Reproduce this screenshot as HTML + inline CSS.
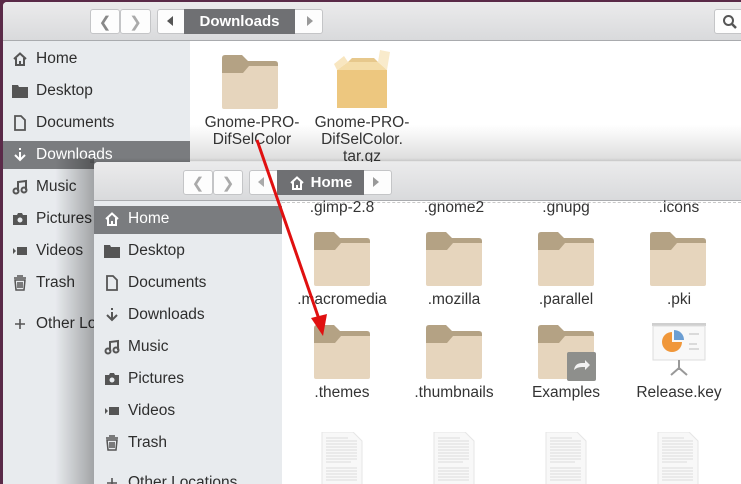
<!DOCTYPE html>
<html><head><meta charset="utf-8"><style>
*{margin:0;padding:0;box-sizing:border-box}
html{width:741px;height:484px;overflow:hidden}
body{width:741px;height:484px;overflow:hidden;position:relative;background:#5a2a48;font-family:"Liberation Sans",sans-serif;font-size:15.5px;color:#3c3c3c}
.a{position:absolute}
.hdr{background:linear-gradient(#ebebec,#d9dadc);border-bottom:1px solid #a9abae}
.btn{position:absolute;height:25px;background:#fdfdfd;border:1px solid #c4c5c7;border-radius:3px;display:flex;align-items:center;justify-content:center;color:#888;font-size:15px}
.sel{position:absolute;height:25px;background:#6f7073;color:#fff;font-weight:bold;display:flex;align-items:center;justify-content:center;font-size:15px}
.side{background:#e8ebee}
.it{position:absolute;left:0;height:20px;display:flex;align-items:center;white-space:nowrap;color:#2e2e2e}
.it svg{position:absolute}
.lbl{position:absolute;text-align:center;width:110px;line-height:17px;color:#333;white-space:nowrap}
#clip{position:absolute;left:0;top:0;width:741px;height:484px;overflow:hidden}
</style></head><body><div id="clip">
<svg width="0" height="0" style="position:absolute"><defs>
<symbol id="fold" viewBox="0 0 56 54"><path d="M0 3Q0 0 3 0H20L26 6H53Q56 6 56 9V24H0Z" fill="#b4a284"/><path d="M0 18H21L27 11H56V52Q56 54 54 54H2Q0 54 0 52Z" fill="#e6d5bd"/></symbol>
<symbol id="doc" viewBox="0 0 42 54"><path d="M1 0H32L41 9V54H1Z" fill="#f8f8f8" stroke="#e6e6e6"/><g stroke="#dcdcdc" stroke-width="1"><path d="M5 6H27M5 9H36M5 12H36M5 15H36M5 18H36M5 21H36M5 24H36M5 27H36M5 30H30M5 36H36M5 39H36M5 42H36M5 45H36M5 48H36"/></g></symbol>
</defs></svg>

<div class="a" style="left:3px;top:2px;width:738px;height:482px;background:#fff;border-radius:4px 0 0 0;overflow:hidden">
 <div class="a hdr" style="left:0;top:0;width:738px;height:39px"></div>
 <div class="btn" style="left:87px;top:7px;width:30px">&#10094;</div>
 <div class="btn" style="left:117px;top:7px;width:31px;color:#aaa">&#10095;</div>
 <div class="btn" style="left:154px;top:7px;width:166px"></div>
 <div class="a" style="left:164px;top:14px;width:0;height:0;border:5px solid transparent;border-right:6px solid #555;border-left:0"></div>
 <div class="sel" style="left:181px;top:7px;width:111px">Downloads</div>
 <div class="a" style="left:304px;top:14px;width:0;height:0;border:5px solid transparent;border-left:6px solid #999;border-right:0"></div>
 <div class="btn" style="left:711px;top:7px;width:40px;justify-content:flex-start;padding-left:7px"><svg width="16" height="16" viewBox="0 0 16 16"><circle cx="6.5" cy="6.5" r="4.5" fill="none" stroke="#555" stroke-width="2"/><path d="M10 10L14 14" stroke="#555" stroke-width="2.5"/></svg></div>
 <div class="a side" style="left:0;top:39px;width:187px;height:443px"></div>
 <div class="a" style="left:0;top:139px;width:187px;height:28px;background:#7a7c7f"></div>
 <div class="a" style="left:187px;top:39px;width:551px;height:120px;background:linear-gradient(#fff 70%,#dcdcdc)"></div>
</div>
<div class="it" style="left:12px;top:49px"><svg width="16" height="16" style="left:0" viewBox="0 0 16 16"><path d="M2 8L8 2.5L14 8M4 7V14H12V7" fill="none" stroke="#555" stroke-width="2"/><rect x="7" y="10" width="2" height="4" fill="#555"/></svg><span style="margin-left:24px">Home</span></div>
<div class="it" style="left:12px;top:81px"><svg width="16" height="16" style="left:0" viewBox="0 0 16 16"><path d="M0 2H6L7 4H16V15H0Z" fill="#555"/></svg><span style="margin-left:24px">Desktop</span></div>
<div class="it" style="left:12px;top:113px"><svg width="16" height="16" style="left:0" viewBox="0 0 16 16"><path d="M3 1H9L13 5V15H3Z" fill="none" stroke="#555" stroke-width="1.8"/></svg><span style="margin-left:24px">Documents</span></div>
<div class="it" style="left:12px;top:145px;color:#fff"><svg width="16" height="16" style="left:0" viewBox="0 0 16 16"><path d="M8 1V3M8 5V12M3 8L8 13L13 8" fill="none" stroke="#fff" stroke-width="2"/></svg><span style="margin-left:24px">Downloads</span></div>
<div class="it" style="left:12px;top:177px"><svg width="16" height="16" style="left:0" viewBox="0 0 16 16"><circle cx="4" cy="12" r="2.5" fill="none" stroke="#555" stroke-width="2"/><circle cx="12" cy="11" r="2.5" fill="none" stroke="#555" stroke-width="2"/><path d="M6 12V3L14 2V11" fill="none" stroke="#555" stroke-width="2"/></svg><span style="margin-left:24px">Music</span></div>
<div class="it" style="left:12px;top:209px"><svg width="16" height="16" style="left:0" viewBox="0 0 16 16"><path d="M1 4H5L6 2H10L11 4H15V14H1Z" fill="#555"/><circle cx="8" cy="9" r="2.5" fill="#e8ebee"/></svg><span style="margin-left:24px">Pictures</span></div>
<div class="it" style="left:12px;top:241px"><svg width="16" height="16" style="left:0" viewBox="0 0 16 16"><path d="M1 5L4 8L1 11Z" fill="#555"/><rect x="5" y="4" width="10" height="8" fill="#555"/></svg><span style="margin-left:24px">Videos</span></div>
<div class="it" style="left:12px;top:273px"><svg width="16" height="16" style="left:0" viewBox="0 0 16 16"><path d="M2 3H14M5 1H11M3 5L4 15H12L13 5ZM6 7V13M8 7V13M10 7V13" fill="none" stroke="#555" stroke-width="1.5"/></svg><span style="margin-left:24px">Trash</span></div>
<div class="it" style="left:12px;top:314px"><svg width="16" height="16" style="left:0" viewBox="0 0 16 16"><path d="M8 3V13M3 8H13" stroke="#555" stroke-width="1.6"/></svg><span style="margin-left:24px">Other Lo</span></div>
<svg class="a" style="left:222px;top:55px" width="56" height="54"><use href="#fold"/></svg>
<div class="lbl" style="left:197px;top:114px">Gnome-PRO-<br>DifSelColor</div>
<svg class="a" style="left:334px;top:48px" width="56" height="62" viewBox="0 0 56 62"><path d="M3 22H53V60H3Z" fill="#edc77f"/><path d="M3 22L14 14H44L53 22Z" fill="#f4dca8"/><path d="M3 22L14 14L10 8L0 16Z" fill="#f8e6c0"/><path d="M44 14L53 22L56 4L46 2Z" fill="#f9ebcc"/><path d="M14 14H44L40 10H18Z" fill="#e7c88c"/></svg>
<div class="lbl" style="left:307px;top:114px">Gnome-PRO-<br>DifSelColor.<br>tar.gz</div>

<div class="a" style="left:55px;top:158px;width:39px;height:326px;background:linear-gradient(90deg,rgba(0,0,0,0),rgba(0,0,0,.3))"></div>
<div class="a" style="left:90px;top:158px;width:651px;height:5px;background:linear-gradient(rgba(0,0,0,0),rgba(0,0,0,.15))"></div>

<div class="a" style="left:94px;top:162px;width:647px;height:322px;background:#fff;border-radius:4px 0 0 0;overflow:hidden">
 <div class="a hdr" style="left:0;top:0;width:647px;height:39px"></div>
 <div class="btn" style="left:89px;top:8px;width:30px;color:#aaa">&#10094;</div>
 <div class="btn" style="left:119px;top:8px;width:30px;color:#aaa">&#10095;</div>
 <div class="btn" style="left:155px;top:8px;width:143px"></div>
 <div class="a" style="left:164px;top:15px;width:0;height:0;border:5px solid transparent;border-right:6px solid #aaa;border-left:0"></div>
 <div class="sel" style="left:183px;top:8px;width:87px"><svg width="16" height="16" viewBox="0 0 16 16" style="margin-right:6px"><path d="M2 8L8 2.5L14 8M4 7V14H12V7" fill="none" stroke="#fff" stroke-width="2"/><rect x="7" y="10" width="2" height="4" fill="#fff"/></svg>Home</div>
 <div class="a" style="left:279px;top:15px;width:0;height:0;border:5px solid transparent;border-left:6px solid #999;border-right:0"></div>
 <div class="a side" style="left:0;top:39px;width:188px;height:283px"></div>
 <div class="a" style="left:0;top:44px;width:188px;height:28px;background:#7a7c7f"></div>
 <div class="a" style="left:188px;top:40px;width:459px;border-top:1px dashed #c8c8c8"></div>
</div>
<div class="it" style="left:104px;top:209px;color:#fff"><svg width="16" height="16" style="left:0" viewBox="0 0 16 16"><path d="M2 8L8 2.5L14 8M4 7V14H12V7" fill="none" stroke="#fff" stroke-width="2"/><rect x="7" y="10" width="2" height="4" fill="#fff"/></svg><span style="margin-left:24px">Home</span></div>
<div class="it" style="left:104px;top:241px"><svg width="16" height="16" style="left:0" viewBox="0 0 16 16"><path d="M0 2H6L7 4H16V15H0Z" fill="#555"/></svg><span style="margin-left:24px">Desktop</span></div>
<div class="it" style="left:104px;top:273px"><svg width="16" height="16" style="left:0" viewBox="0 0 16 16"><path d="M3 1H9L13 5V15H3Z" fill="none" stroke="#555" stroke-width="1.8"/></svg><span style="margin-left:24px">Documents</span></div>
<div class="it" style="left:104px;top:305px"><svg width="16" height="16" style="left:0" viewBox="0 0 16 16"><path d="M8 1V3M8 5V12M3 8L8 13L13 8" fill="none" stroke="#555" stroke-width="2"/></svg><span style="margin-left:24px">Downloads</span></div>
<div class="it" style="left:104px;top:337px"><svg width="16" height="16" style="left:0" viewBox="0 0 16 16"><circle cx="4" cy="12" r="2.5" fill="none" stroke="#555" stroke-width="2"/><circle cx="12" cy="11" r="2.5" fill="none" stroke="#555" stroke-width="2"/><path d="M6 12V3L14 2V11" fill="none" stroke="#555" stroke-width="2"/></svg><span style="margin-left:24px">Music</span></div>
<div class="it" style="left:104px;top:369px"><svg width="16" height="16" style="left:0" viewBox="0 0 16 16"><path d="M1 4H5L6 2H10L11 4H15V14H1Z" fill="#555"/><circle cx="8" cy="9" r="2.5" fill="#e8ebee"/></svg><span style="margin-left:24px">Pictures</span></div>
<div class="it" style="left:104px;top:401px"><svg width="16" height="16" style="left:0" viewBox="0 0 16 16"><path d="M1 5L4 8L1 11Z" fill="#555"/><rect x="5" y="4" width="10" height="8" fill="#555"/></svg><span style="margin-left:24px">Videos</span></div>
<div class="it" style="left:104px;top:433px"><svg width="16" height="16" style="left:0" viewBox="0 0 16 16"><path d="M2 3H14M5 1H11M3 5L4 15H12L13 5ZM6 7V13M8 7V13M10 7V13" fill="none" stroke="#555" stroke-width="1.5"/></svg><span style="margin-left:24px">Trash</span></div>
<div class="it" style="left:104px;top:473px"><svg width="16" height="16" style="left:0" viewBox="0 0 16 16"><path d="M8 3V13M3 8H13" stroke="#555" stroke-width="1.6"/></svg><span style="margin-left:24px">Other Locations</span></div>

<div class="lbl" style="left:287px;top:199px">.gimp-2.8</div>
<div class="lbl" style="left:399px;top:199px">.gnome2</div>
<div class="lbl" style="left:511px;top:199px">.gnupg</div>
<div class="lbl" style="left:624px;top:199px">.icons</div>
<svg class="a" style="left:314px;top:232px" width="56" height="54"><use href="#fold"/></svg>
<svg class="a" style="left:426px;top:232px" width="56" height="54"><use href="#fold"/></svg>
<svg class="a" style="left:538px;top:232px" width="56" height="54"><use href="#fold"/></svg>
<svg class="a" style="left:650px;top:232px" width="56" height="54"><use href="#fold"/></svg>
<div class="lbl" style="left:287px;top:291px">.macromedia</div>
<div class="lbl" style="left:399px;top:291px">.mozilla</div>
<div class="lbl" style="left:511px;top:291px">.parallel</div>
<div class="lbl" style="left:624px;top:291px">.pki</div>
<svg class="a" style="left:314px;top:325px" width="56" height="54"><use href="#fold"/></svg>
<svg class="a" style="left:426px;top:325px" width="56" height="54"><use href="#fold"/></svg>
<svg class="a" style="left:538px;top:325px" width="56" height="54"><use href="#fold"/></svg>
<svg class="a" style="left:567px;top:352px" width="29" height="29" viewBox="0 0 29 29"><rect x="0" y="0" width="29" height="29" rx="2" fill="#8e8f8c"/><path d="M7 18Q8 11 15 11H18V8L23 13L18 18V15H15Q10 15 7 18Z" fill="#f2f2f2"/></svg>
<svg class="a" style="left:651px;top:322px" width="56" height="56" viewBox="0 0 56 56"><rect x="1" y="1" width="54" height="3" fill="#cfcfcf"/><rect x="2" y="4" width="52" height="34" fill="#f8f8f8" stroke="#ddd"/><path d="M21 10A10 10 0 1 0 31 20H21Z" fill="#f0973a"/><path d="M23 8V18H33A10 10 0 0 0 23 8Z" fill="#6b9ed3"/><path d="M38 12H48M38 22H46M38 27H48" stroke="#bbb"/><path d="M28 38V48M28 46L20 53M28 46L36 53" stroke="#999" stroke-width="2"/></svg>
<div class="lbl" style="left:511px;top:384px">Examples</div>
<div class="lbl" style="left:624px;top:384px">Release.key</div>
<div class="lbl" style="left:287px;top:384px">.themes</div>
<div class="lbl" style="left:399px;top:384px">.thumbnails</div>
<svg class="a" style="left:321px;top:432px" width="42" height="54"><use href="#doc"/></svg>
<svg class="a" style="left:433px;top:432px" width="42" height="54"><use href="#doc"/></svg>
<svg class="a" style="left:545px;top:432px" width="42" height="54"><use href="#doc"/></svg>
<svg class="a" style="left:657px;top:432px" width="42" height="54"><use href="#doc"/></svg>

<svg class="a" style="left:0;top:0" width="741" height="484"><path d="M257 140L320 322" stroke="#e01010" stroke-width="3"/><path d="M323 336L311 318L327 314Z" fill="#e01010"/></svg>
</div></body></html>
